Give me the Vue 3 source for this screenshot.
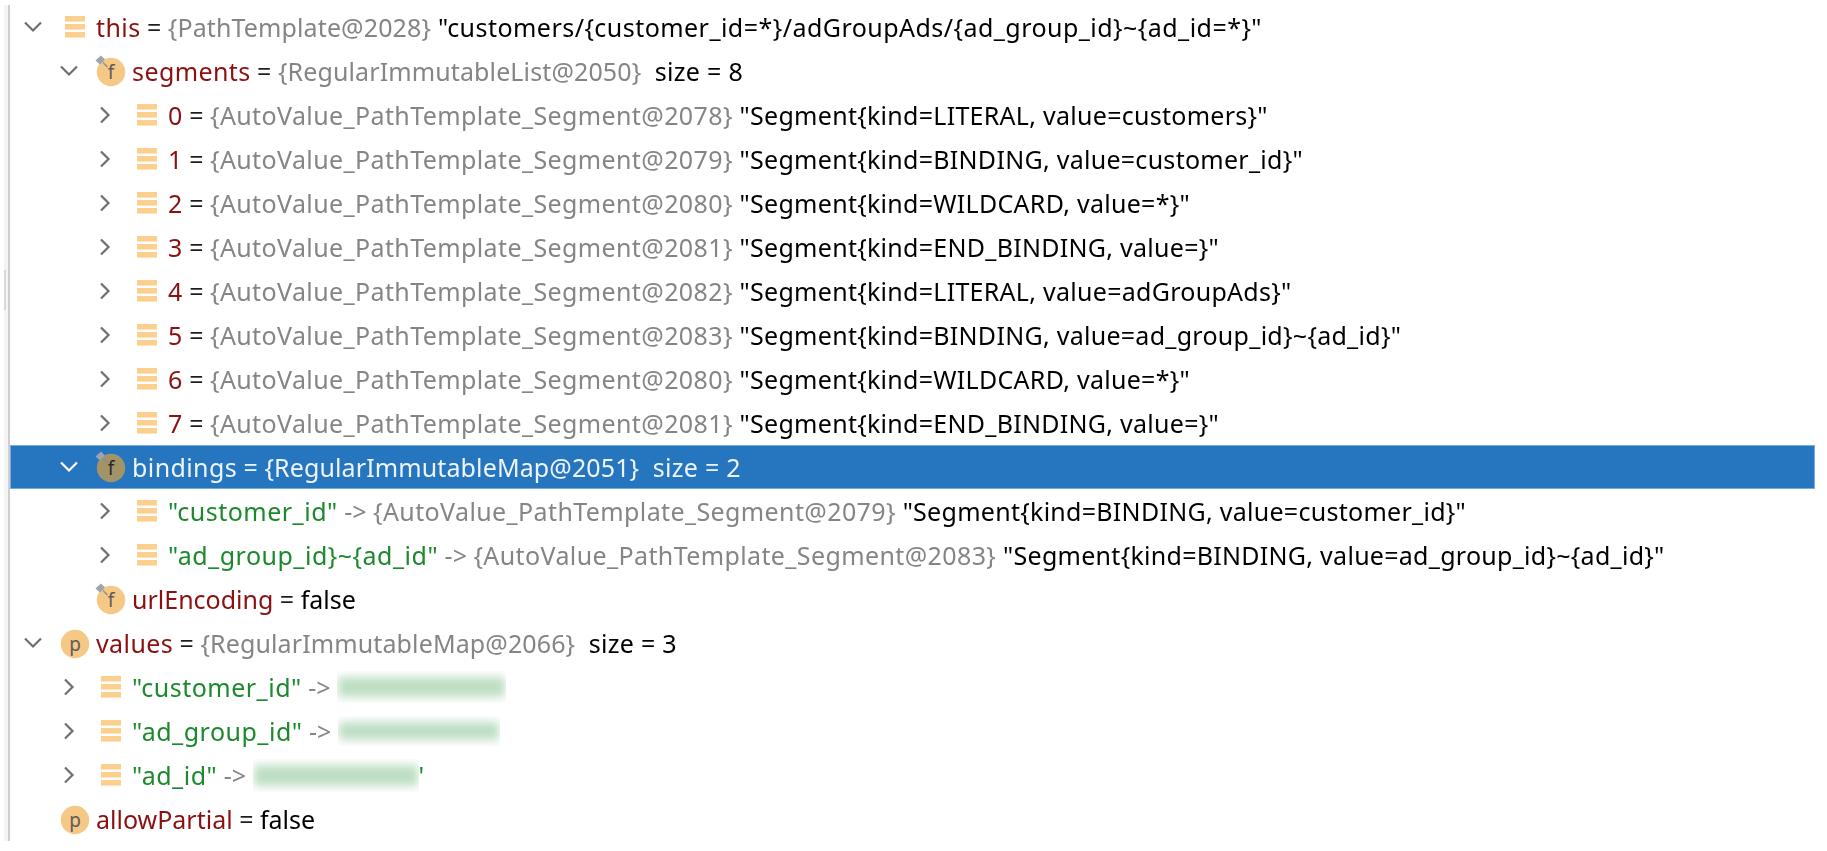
<script setup>
const seg = (i, id, val) => ({
  level: 2, chevron: 'right', icon: 'list',
  parts: [['key', String(i)], ['eq', ' = '], ['ref auto', `{AutoValue_PathTemplate_Segment@${id}}`], ['val', ` "Segment{kind=${val}}"`]],
})
const rows = [
  { level: 0, chevron: 'down', icon: 'list', parts: [['key', 'this'], ['eq', ' = '], ['ref', '{PathTemplate@2028}'], ['val wide', ' "customers/{customer_id=*}/adGroupAds/{ad_group_id}~{ad_id=*}"']] },
  { level: 1, chevron: 'down', icon: 'f', parts: [['key', 'segments'], ['eq', ' = '], ['ref', '{RegularImmutableList@2050}'], ['val', '  size = 8']] },
  seg(0, 2078, 'LITERAL, value=customers'),
  seg(1, 2079, 'BINDING, value=customer_id'),
  seg(2, 2080, 'WILDCARD, value=*'),
  seg(3, 2081, 'END_BINDING, value='),
  seg(4, 2082, 'LITERAL, value=adGroupAds'),
  seg(5, 2083, 'BINDING, value=ad_group_id}~{ad_id'),
  seg(6, 2080, 'WILDCARD, value=*'),
  seg(7, 2081, 'END_BINDING, value='),
  { level: 1, chevron: 'down', icon: 'f', selected: true, parts: [['key', 'bindings'], ['eq', ' = '], ['ref', '{RegularImmutableMap@2051}'], ['val', '  size = 2']] },
  { level: 2, chevron: 'right', icon: 'list', parts: [['str', '"customer_id"'], ['arrow', ' -> '], ['ref auto', '{AutoValue_PathTemplate_Segment@2079}'], ['val', ' "Segment{kind=BINDING, value=customer_id}"']] },
  { level: 2, chevron: 'right', icon: 'list', parts: [['str', '"ad_group_id}~{ad_id"'], ['arrow', ' -> '], ['ref auto', '{AutoValue_PathTemplate_Segment@2083}'], ['val', ' "Segment{kind=BINDING, value=ad_group_id}~{ad_id}"']] },
  { level: 1, icon: 'f', parts: [['key flat', 'urlEncoding'], ['eq', ' = '], ['val flat', 'false']] },
  { level: 0, chevron: 'down', icon: 'p', parts: [['key', 'values'], ['eq', ' = '], ['ref', '{RegularImmutableMap@2066}'], ['val', '  size = 3']] },
  { level: 1, chevron: 'right', icon: 'list', mask: 'm1', parts: [['str', '"customer_id"'], ['arrow', ' -> ']] },
  { level: 1, chevron: 'right', icon: 'list', mask: 'm2', parts: [['str', '"ad_group_id"'], ['arrow', ' -> ']] },
  { level: 1, chevron: 'right', icon: 'list', mask: 'm3', parts: [['str', '"ad_id"'], ['arrow', ' -> ']] },
  { level: 0, icon: 'p', parts: [['key flat', 'allowPartial'], ['eq', ' = '], ['val flat', 'false']] },
]
</script>

<template>
  <div class="tree">
    <div class="gutter"><span class="grip"></span></div>
    <div class="rows">
      <div
        v-for="(row, i) in rows"
        :key="i"
        class="row"
        :class="[`level-${row.level}`, { selected: row.selected }]"
      >
        <span class="chev">
          <svg v-if="row.chevron === 'down'" width="20" height="14" viewBox="0 0 20 14">
            <path d="M2 2.5 L10 10.5 L18 2.5" />
          </svg>
          <svg v-else-if="row.chevron === 'right'" width="14" height="18" viewBox="0 0 14 18">
            <path d="M3 1.5 L10.5 9 L3 16.5" />
          </svg>
        </span>
        <span class="icon">
          <svg v-if="row.icon === 'list'" class="list" width="22" height="22" viewBox="0 0 22 22">
            <rect x="1" y="0" width="20" height="5.6" />
            <rect x="1" y="8" width="20" height="5.6" />
            <rect x="1" y="16" width="20" height="5.6" />
          </svg>
          <svg v-else class="badge" width="34" height="34" viewBox="0 0 34 34">
            <circle cx="17" cy="18" r="14.2" class="disc" />
            <text x="17" y="24.5" text-anchor="middle" class="letter">{{ row.icon }}</text>
            <g v-if="row.icon === 'f'" class="pin">
              <path d="M1.5 6.5 L7 1.5 L11 5.5 L6 10.5 Z" />
              <path d="M9 8.5 L13.5 13" class="needle" />
            </g>
          </svg>
        </span>
        <span class="text">
          <span v-for="(p, j) in row.parts" :key="j" :class="p[0]">{{ p[1] }}</span>
          <span v-if="row.mask" class="mask" :class="row.mask"><span class="smear"></span></span>
          <span v-if="row.mask === 'm3'" class="str">'</span>
        </span>
      </div>
    </div>
  </div>
</template>

<style scoped>
.tree {
  display: flex;
  padding-top: 5px;
  width: 1815px;
  font-family: "Noto Sans", sans-serif;
  font-size: 25px;
  background: #fff;
}
.gutter {
  position: relative;
  flex: none;
  width: 8px;
  border-right: 2px solid #cfcfcf;
  background: linear-gradient(to right, #fff 4px, #f4f4f4 4px);
}
.grip {
  position: absolute;
  left: 4px;
  top: 265px;
  width: 2px;
  height: 40px;
  background: #d8d8d8;
}
.rows {
  flex: 1;
  min-width: 0;
}
.row {
  display: flex;
  align-items: center;
  height: 44px;
  white-space: pre;
  box-sizing: border-box;
}
.level-0 { padding-left: 13px; }
.level-1 { padding-left: 49px; }
.level-2 { padding-left: 85px; }
.chev {
  flex: none;
  width: 20px;
  height: 20px;
  margin-right: 17px;
  display: flex;
  align-items: center;
  justify-content: center;
}
.chev svg { fill: none; stroke: #6f6f6f; stroke-width: 2.2; }
.icon {
  flex: none;
  width: 30px;
  height: 34px;
  margin-right: 6px;
  display: flex;
  align-items: center;
  justify-content: center;
}
.list rect { fill: #fbcf8e; }
.badge { flex: none; }
.disc { fill: #f6c885; }
.letter {
  font-family: "Noto Sans", sans-serif;
  font-size: 19px;
  fill: #5c5c5c;
}
.pin path { fill: #9aa5b0; }
.pin .needle { fill: none; stroke: #8a8f95; stroke-width: 1.4; }
.text { display: flex; align-items: center; filter: blur(0.4px); }
.key { color: #8b1010; letter-spacing: 0.4px; }
.eq { color: #1d1d1d; }
.ref { color: #858585; letter-spacing: 0.12px; }
.auto { letter-spacing: 0.39px; }
.val { color: #000; letter-spacing: 0.28px; }
.wide { letter-spacing: 0.46px; }
.key.flat { letter-spacing: 0; }
.val.flat { letter-spacing: 0; }
.str { color: #1c8a2c; letter-spacing: 0.5px; }
.arrow { color: #858585; }
.mask {
  display: block;
  height: 32px;
  background: #fff;
  overflow: hidden;
  padding: 6px 1px;
  box-sizing: border-box;
}
.m1 { width: 169px; }
.m2 { width: 162px; height: 30px; }
.m3 { width: 166px; height: 33px; }
.smear {
  display: block;
  height: 100%;
  background: #bddec3;
  filter: blur(5px);
}
.selected { background: #2675bf; box-shadow: inset 0 0 0 1px #7aaadc; }
.selected .chev svg { stroke: #fff; }
.selected .key, .selected .eq, .selected .ref, .selected .val { color: #eef4fb; }
.selected .disc { fill: #a39468; }
.selected .letter { fill: #2e2a20; }
</style>
